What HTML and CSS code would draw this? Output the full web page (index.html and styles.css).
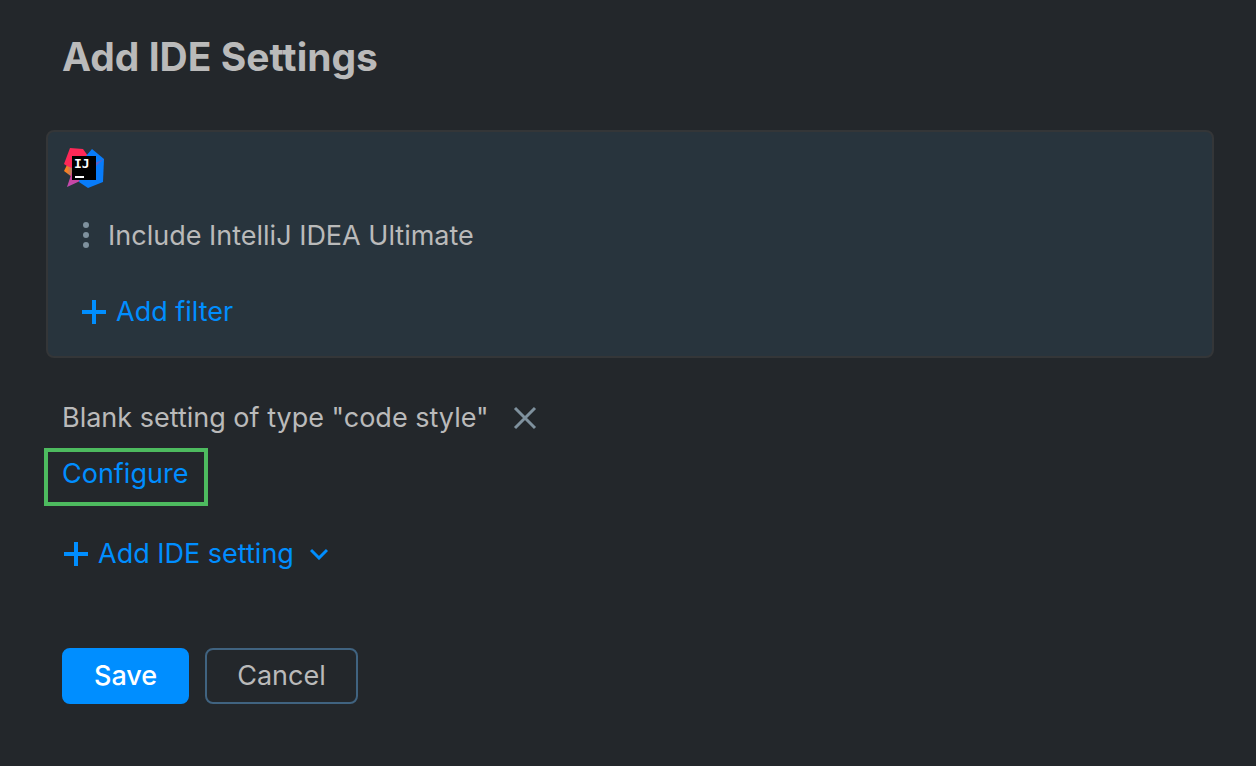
FILE: index.html
```html
<!DOCTYPE html>
<html lang="en">
<head>
<meta charset="utf-8">
<title>Add IDE Settings</title>
<link rel="stylesheet" href="styles.css">
</head>
<body>
<main class="page">
  <h1 class="title">Add IDE Settings</h1>
  <section class="card">
    <svg class="logo" viewBox="0 0 40 40" role="img" aria-label="IntelliJ IDEA">
      <defs>
        <linearGradient id="orange" x1="0" y1="0" x2="1" y2="0"><stop offset=".3" stop-color="#fc801d"/><stop offset="1" stop-color="#b07a70"/></linearGradient>
        <linearGradient id="pink" x1="0" y1="0" x2="0" y2="1"><stop offset="0" stop-color="#e0357c"/><stop offset="1" stop-color="#c04cb4"/></linearGradient>
        <linearGradient id="violet" x1="0" y1="0" x2="1" y2="0"><stop offset="0" stop-color="#8a54b0"/><stop offset="1" stop-color="#3f68d2"/></linearGradient>
      </defs>
      <path fill="url(#orange)" d="M3 17 0 23l8 6V17z"/>
      <path fill="#fe2857" d="M6 0 19 1l5 7v4L8 20l-5-2-3-2z"/>
      <path fill="url(#pink)" d="M8 18v6L3 39l13-6 4-8z"/>
      <path fill="#087cfa" d="M28 1 40 11l-1 23-15 6-9-6 7-26z"/>
      <path fill="url(#violet)" d="m40 11-8 7h-8z"/>
      <path d="M8 8h24v24H8z"/>
      <text class="logo-text" x="10" y="20">IJ</text>
      <path fill="#fff" d="M11 28h9v2h-9z"/>
    </svg>
    <div class="rule">
      <button class="icon-button" type="button" aria-label="More actions">
        <svg width="8" height="28" viewBox="0 0 8 28" fill="#7f919e"><circle cx="4" cy="3" r="3"/><circle cx="4" cy="13" r="3"/><circle cx="4" cy="23" r="3"/></svg>
      </button>
      <span>Include IntelliJ IDEA Ultimate</span>
    </div>
    <button class="link-button add-filter" type="button">
      <svg class="plus" viewBox="0 0 24 24"><path d="M10 0h4v10h10v4H14v10h-4V14H0v-4h10z"/></svg>
      Add filter
    </button>
  </section>
  <div class="setting">
    <span>Blank setting of type "code style"</span>
    <button class="icon-button" type="button" aria-label="Remove setting">
      <svg width="24" height="24" viewBox="0 0 24 24" fill="none" stroke="#7f919e" stroke-width="3"><path d="m2 2 20 20m0-20L2 22"/></svg>
    </button>
  </div>
  <a class="configure" href="#configure">Configure</a>
  <button class="link-button add-setting" type="button">
    <svg class="plus" viewBox="0 0 24 24"><path d="M10 0h4v10h10v4H14v10h-4V14H0v-4h10z"/></svg>
    Add IDE setting
    <svg class="chevron" viewBox="0 0 18 12" fill="none" stroke="currentColor" stroke-width="3"><path d="m1 2 8 8 8-8"/></svg>
  </button>
  <div class="actions">
    <button class="button primary" type="button">Save</button>
    <button class="button" type="button">Cancel</button>
  </div>
</main>
</body>
</html>
```
FILE: styles.css
```css
* { box-sizing: border-box; }

body {
  margin: 0;
  background: #23272b;
  color: #bababa;
  font: 27px/40px Inter, "Liberation Sans", sans-serif;
}

button {
  margin: 0;
  padding: 0;
  border: 0;
  background: none;
  color: inherit;
  font: inherit;
  cursor: pointer;
}

svg { display: block; flex: none; }

.page {
  display: flex;
  flex-direction: column;
  align-items: flex-start;
  padding: 32px 42px 60px 46px;
}

.title {
  margin: 0 16px;
  font-size: 39px;
  line-height: 50px;
  font-weight: 700;
}

.card {
  align-self: stretch;
  margin-top: 48px;
  padding: 16px 16px 24px;
  border: 2px solid #343638;
  border-radius: 8px;
  background: #28343d;
}

.logo { width: 40px; height: 40px; }

.logo-text {
  fill: #fff;
  font: bold 13px "DejaVu Sans Mono", monospace;
}

.rule {
  display: flex;
  align-items: center;
  gap: 18px;
  margin: 28px 0 0 18px;
}

.icon-button { display: flex; }

.link-button {
  display: flex;
  align-items: center;
  gap: 10px;
  color: #008eff;
}

.plus {
  width: 24px;
  height: 24px;
  fill: currentColor;
}

.add-filter { margin: 36px 0 0 18px; }

.setting {
  display: flex;
  align-items: center;
  gap: 24px;
  margin: 40px 16px 0;
}

.configure {
  margin: 10px 0 0 -2px;
  padding: 2px 16px 8px 14px;
  border: 4px solid #4dbb5f;
  color: #008eff;
  text-decoration: none;
}

.add-setting { margin: 28px 18px 0; }

.chevron {
  width: 18px;
  height: 12px;
  margin-left: 6px;
}

.actions {
  display: flex;
  gap: 16px;
  margin: 74px 16px 0;
}

.button {
  height: 56px;
  padding: 0 30px;
  border: 2px solid #406380;
  border-radius: 8px;
}

.primary {
  border-color: #008eff;
  background: #008eff;
  color: #fff;
  font-weight: 500;
}
```
